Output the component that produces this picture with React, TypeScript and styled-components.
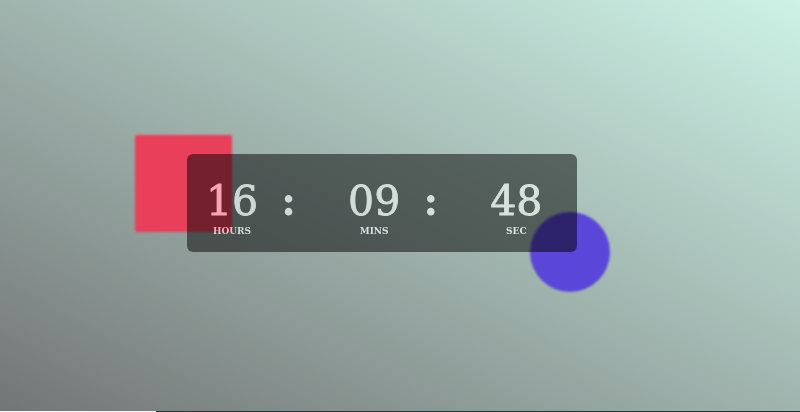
import styled, { createGlobalStyle } from "styled-components";

const GlobalStyle = createGlobalStyle`
  html, body {
    margin: 0;
    padding: 0;
  }
  body {
    font-family: "DejaVu Serif", "Liberation Serif", serif;
    overflow: hidden;
  }
`;

const Hero = styled.section`
  position: relative;
  height: 411px;
  padding: 154px 0 0 187px;
  box-sizing: border-box;
  background: linear-gradient(to top right, #737676, #cdf2e6);
  overflow: hidden;
`;

const Square = styled.div`
  position: absolute;
  left: 135px;
  top: 135px;
  width: 97px;
  height: 97px;
  border-radius: 2px;
  background: #e8405a;
  filter: blur(1px);
`;

const Circle = styled.div`
  position: absolute;
  left: 530px;
  top: 212px;
  width: 80px;
  height: 80px;
  border-radius: 50%;
  background: #5a47da;
  filter: blur(1px);
`;

const Card = styled.div`
  position: relative;
  display: flex;
  align-items: flex-start;
  width: 390px;
  height: 98px;
  box-sizing: border-box;
  padding: 27px 0 0 16px;
  border-radius: 6px;
  background: rgba(0, 0, 0, 0.5);
`;

const Unit = styled.div`
  display: flex;
  flex-direction: column;
  align-items: center;
  width: 58px;
`;

const Digits = styled.span`
  font-size: 41px;
  line-height: 41px;
  color: #848484;
  -webkit-text-stroke: 0.8px #848484;
  mix-blend-mode: plus-lighter;
`;

const Label = styled.span`
  margin-top: 4px;
  font-size: 9px;
  font-weight: 700;
  line-height: 10px;
  color: #8a8a8a;
  mix-blend-mode: plus-lighter;
`;

const Colon = styled.span`
  margin: 0 49px 0 20px;
  font-size: 41px;
  font-weight: 700;
  line-height: 41px;
  color: #848484;
  mix-blend-mode: plus-lighter;
`;

const Footer = styled.footer`
  display: flex;
  height: 1px;
  background: #1f3636;
`;

const FooterLeft = styled.div`
  width: 156px;
  background: #f4f4f4;
`;

export default function App() {
  return (
    <>
      <GlobalStyle />
      <Hero>
        <Square />
        <Circle />
        <Card>
          <Unit>
            <Digits>16</Digits>
            <Label>HOURS</Label>
          </Unit>
          <Colon>:</Colon>
          <Unit>
            <Digits>09</Digits>
            <Label>MINS</Label>
          </Unit>
          <Colon>:</Colon>
          <Unit>
            <Digits>48</Digits>
            <Label>SEC</Label>
          </Unit>
        </Card>
      </Hero>
      <Footer>
        <FooterLeft />
      </Footer>
    </>
  );
}
